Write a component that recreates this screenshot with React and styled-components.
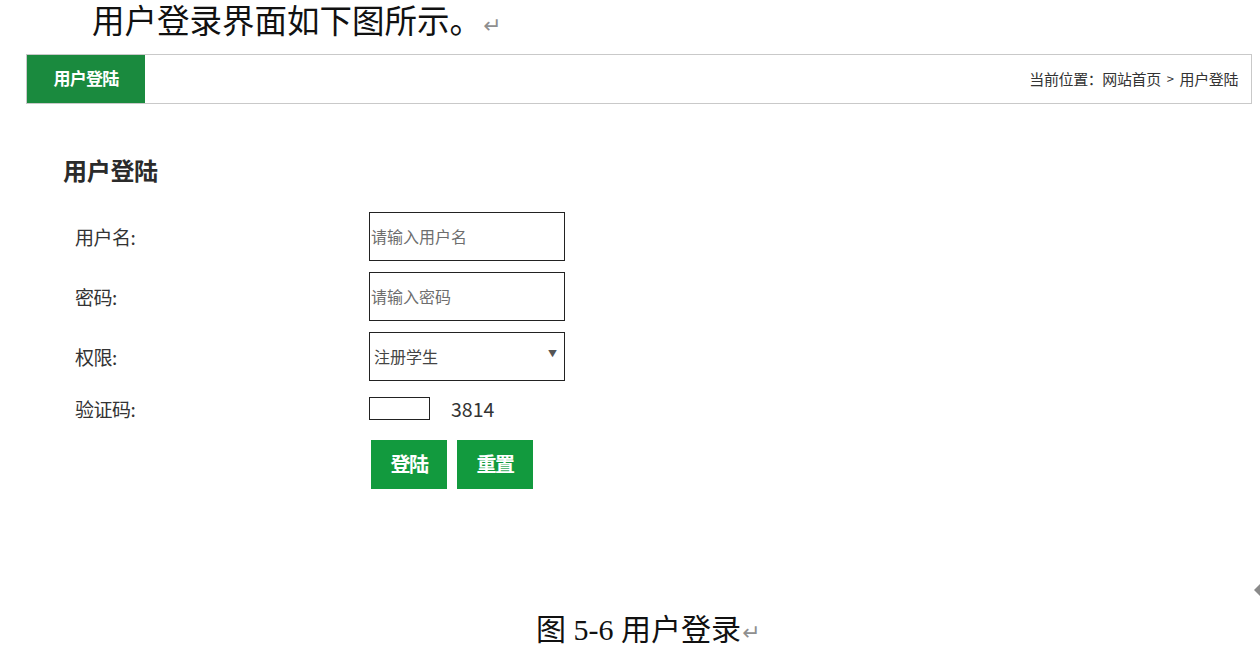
import React from 'react';
import styled, { createGlobalStyle } from 'styled-components';

const GlobalStyle = createGlobalStyle`
  html, body {
    margin: 0;
    padding: 0;
    background: #fff;
  }
  body {
    font-family: "Liberation Serif", "Noto Sans CJK SC", serif;
  }
`;

const Page = styled.div`
  position: relative;
  width: 1260px;
  height: 650px;
  overflow: hidden;
`;

const DocText = styled.p`
  margin: 0;
  padding-left: ${p => p.indent}px;
  padding-top: ${p => p.top || 0}px;
  font-family: "Liberation Serif", "Noto Sans CJK SC", serif;
  font-size: ${p => p.size}px;
  line-height: ${p => p.lh}px;
  height: ${p => p.lh}px;
  color: #111;
  white-space: nowrap;
`;

const Return = styled.span`
  color: #8f8f8f;
  font-family: "DejaVu Sans", sans-serif;
  font-size: 22px;
  margin-left: 1px;
`;

const Shot = styled.div`
  margin-left: 26px;
  margin-top: 10px;
  width: 1226px;
  font-family: "Noto Sans CJK SC", "Microsoft YaHei", sans-serif;
`;

const TopBar = styled.div`
  display: flex;
  align-items: stretch;
  justify-content: space-between;
  height: 48px;
  border: 1px solid #c9c9c9;
`;

const Tab = styled.div`
  width: 118px;
  background: #1a8a3e;
  color: #fff;
  font-size: 17px;
  font-weight: 700;
  display: flex;
  align-items: center;
  justify-content: center;
  letter-spacing: -0.8px;
  padding-bottom: 3px;
  box-sizing: border-box;
`;

const Crumb = styled.div`
  display: flex;
  align-items: center;
  padding-right: 13px;
  padding-bottom: 2px;
  font-size: 15px;
  color: #333;
  letter-spacing: -0.4px;
`;

const Gt = styled.span`
  margin: 0 6px;
  font-size: 13px;
`;

const Heading = styled.h2`
  margin: 51px 0 0 37px;
  font-size: 24px;
  line-height: 30px;
  font-weight: 700;
  color: #2b2b2b;
  letter-spacing: -0.3px;
`;

const Form = styled.div`
  margin: ${p => p.top}px 0 0 49px;
  display: grid;
  grid-template-columns: 294px 1fr;
  row-gap: ${p => p.gap}px;
  align-items: center;
`;

const Label = styled.label`
  font-size: 19px;
  line-height: 23px;
  color: #333;
  letter-spacing: -0.5px;
`;

const Field = styled.input`
  box-sizing: border-box;
  width: 196px;
  height: 49px;
  margin: 0;
  border: 1.5px solid #222;
  padding: 0 0 2px 1px;
  font-family: inherit;
  font-size: 16px;
  color: #333;
  outline: none;
  &::placeholder {
    color: #6e6e6e;
  }
`;

const Select = styled.div`
  box-sizing: border-box;
  width: 196px;
  height: 49px;
  border: 1.5px solid #222;
  display: flex;
  align-items: center;
  justify-content: space-between;
  padding: 0 7px 2px 4px;
  font-size: 16px;
  color: #444;
`;

const Caret = styled.span`
  font-size: 9px;
  color: #555;
  margin-top: -4px;
`;

const CaptchaRow = styled.div`
  display: flex;
  align-items: center;
  gap: 21px;
`;

const CaptchaInput = styled.input`
  box-sizing: border-box;
  width: 61px;
  height: 23px;
  margin: 0;
  border: 1.5px solid #222;
  padding: 0;
  outline: none;
`;

const Code = styled.span`
  font-size: 19.5px;
  line-height: 23px;
  color: #333;
`;

const Buttons = styled.div`
  display: flex;
  gap: 10px;
  padding-left: 2px;
`;

const Button = styled.button`
  width: 76px;
  height: 49px;
  border: none;
  margin: 0;
  padding: 0 0 3px;
  background: #129a3e;
  color: #fff;
  font-family: inherit;
  font-size: 20px;
  font-weight: 700;
  letter-spacing: -1.5px;
  cursor: pointer;
`;

const Marker = styled.svg`
  position: absolute;
  right: 0;
  top: 584px;
`;

export default function App() {
  return (
    <Page>
      <GlobalStyle />
      <DocText indent={92} size={32.5} lh={44}>
        用户登录界面如下图所示。<Return>↵</Return>
      </DocText>
      <Shot>
        <TopBar>
          <Tab>用户登陆</Tab>
          <Crumb>
            当前位置：网站首页<Gt>&gt;</Gt>用户登陆
          </Crumb>
        </TopBar>
        <Heading>用户登陆</Heading>
        <Form top={27} gap={11}>
          <Label>用户名:</Label>
          <Field placeholder="请输入用户名" />
          <Label>密码:</Label>
          <Field type="password" placeholder="请输入密码" />
          <Label>权限:</Label>
          <Select>
            <span>注册学生</span>
            <Caret>▼</Caret>
          </Select>
        </Form>
        <Form top={16} gap={20}>
          <Label>验证码:</Label>
          <CaptchaRow>
            <CaptchaInput />
            <Code>3814</Code>
          </CaptchaRow>
          <span />
          <Buttons>
            <Button>登陆</Button>
            <Button>重置</Button>
          </Buttons>
        </Form>
      </Shot>
      <DocText indent={536} top={123} size={30} lh={36}>
        图 5-6 用户登录<Return>↵</Return>
      </DocText>
      <Marker width="6" height="12" viewBox="0 0 6 12">
        <path d="M6 0 L0 6 L6 12 Z" fill="#8a8a8a" />
      </Marker>
    </Page>
  );
}
